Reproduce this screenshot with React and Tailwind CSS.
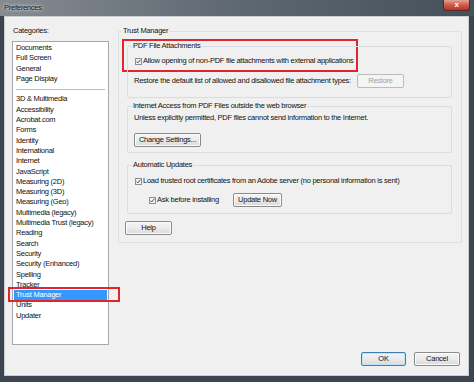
const categories = [
  'Documents',
  'Full Screen',
  'General',
  'Page Display',
  '-',
  '3D & Multimedia',
  'Accessibility',
  'Acrobat.com',
  'Forms',
  'Identity',
  'International',
  'Internet',
  'JavaScript',
  'Measuring (2D)',
  'Measuring (3D)',
  'Measuring (Geo)',
  'Multimedia (legacy)',
  'Multimedia Trust (legacy)',
  'Reading',
  'Search',
  'Security',
  'Security (Enhanced)',
  'Spelling',
  'Tracker',
  'Trust Manager',
  'Units',
  'Updater',
];

function Check() {
  return (
    <span className="flex h-[7px] w-[7px] shrink-0 items-center justify-center border border-[#8e8f8f] bg-[#f3f3f3]">
      <svg width="5" height="5" viewBox="0 0 5 5">
        <path d="M0.5 2.6 L1.8 3.9 L4.5 0.7" fill="none" stroke="#333" strokeWidth="0.9" />
      </svg>
    </span>
  );
}

function Btn({ children, className = '', disabled = false, primary = false }) {
  const border = primary
    ? 'border-[#3c7fb1] shadow-[inset_0_0_0_1px_#bfe2f6]'
    : disabled
      ? 'border-[#b9bcbf]'
      : 'border-[#8a8a8a] shadow-[inset_0_0_0_1px_#fcfcfc]';
  const fill = disabled
    ? 'bg-[#f4f4f4] text-[#a3a3a3]'
    : 'bg-linear-to-b from-[#f4f4f4] via-[#ebebeb] to-[#d9d9d9] text-[#111]';
  return (
    <div
      className={`flex h-[14px] shrink-0 items-center justify-center rounded-[2px] border leading-none ${border} ${fill} ${className}`}
    >
      {children}
    </div>
  );
}

function Group({ title, className = '', children }) {
  return (
    <div className={`relative ml-[8px] w-[325px] rounded-[2px] border border-[#d9dde0] ${className}`}>
      <div className="absolute left-[4px] top-[-6px] bg-[#f0f0f0] px-[1px] leading-[10px]">{title}</div>
      {children}
    </div>
  );
}

export default function App() {
  return (
    <div className="flex h-[382px] w-[474px] flex-col bg-[#3d4650] font-['Liberation_Sans',Arial,sans-serif] text-[7.5px] tracking-[-0.25px] text-[#111]">
      {/* Title bar */}
      <div className="relative flex h-[16px] shrink-0 items-center bg-linear-to-r from-[#868b91] via-[#5e6871] to-[#44505b] pl-[4px]">
        <span className="text-[#111] [text-shadow:0_0_4px_#d8dde2,0_0_2px_#e6eaee]">Preferences</span>
        <div className="absolute right-[4px] top-0 flex h-[11px] w-[27px] items-center justify-center rounded-b-[3px] border border-t-0 border-[#5a2a25] bg-linear-to-b from-[#e3a293] via-[#cf5a47] to-[#b8322a] text-[8px] font-bold leading-none text-white">
          x
        </div>
      </div>

      {/* Client area */}
      <div className="ml-[4px] mr-[5px] mb-[6px] flex flex-1 flex-col border border-[#c9ced3] bg-[#f0f0f0]">
        <div className="flex pt-[9px]">
          {/* Categories */}
          <div className="ml-[7px] w-[97px] shrink-0">
            <div className="h-[10px] pl-[1px] leading-[10px]">Categories:</div>
            <div className="mt-[5px] h-[304px] border border-[#a4a9ae] bg-white pt-[1px]">
              {categories.map((c, i) =>
                c === '-' ? (
                  <div key={i} className="flex h-[10.3px] items-center px-[3px]">
                    <div className="h-px w-full bg-[#a9bfd6]" />
                  </div>
                ) : c === 'Trust Manager' ? (
                  <div key={i} className="relative mx-[1px] h-[10.3px] bg-[#3399ff] pl-[2px] leading-[10.3px] text-white">
                    {c}
                    <div className="absolute left-[-6px] right-[-13px] top-[-3px] bottom-[-2px] border-2 border-[#e0262c]" />
                  </div>
                ) : (
                  <div key={i} className="h-[10.3px] pl-[3px] leading-[10.3px]">
                    {c}
                  </div>
                )
              )}
            </div>
          </div>

          {/* Trust Manager panel */}
          <div className="relative ml-[9px] mt-[5px] h-[212px] w-[344px] border border-[#dfe2e5]">
            <div className="absolute left-[3px] top-[-6px] bg-[#f0f0f0] px-[1px] leading-[10px]">Trust Manager</div>
            <div className="absolute left-[3px] top-[7px] h-[33px] w-[236px] border-2 border-[#e0262c]" />

            <Group title="PDF File Attachments" className="mt-[14px] h-[52px]">
              <div className="mt-[9px] flex h-[10px] items-center gap-[1px] pl-[7px]">
                <Check />
                <span className="leading-[10px]">Allow opening of non-PDF file attachments with external applications</span>
              </div>
              <div className="mt-[8px] flex items-center pl-[6px]">
                <span className="w-[223px] shrink-0 leading-[10px]">
                  Restore the default list of allowed and disallowed file attachment types:
                </span>
                <Btn disabled className="w-[47px]">Restore</Btn>
              </div>
            </Group>

            <Group title="Internet Access from PDF Files outside the web browser" className="mt-[8px] h-[47px]">
              <div className="mt-[6px] pl-[6px] leading-[10px]">
                Unless explicitly permitted, PDF files cannot send information to the Internet.
              </div>
              <div className="mt-[10px] pl-[6px]">
                <Btn className="w-[67px]">Change Settings...</Btn>
              </div>
            </Group>

            <Group title="Automatic Updates" className="mt-[12px] h-[49px]">
              <div className="mt-[10px] flex h-[10px] items-center gap-[1px] pl-[7px]">
                <Check />
                <span className="leading-[10px]">
                  Load trusted root certificates from an Adobe server (no personal information is sent)
                </span>
              </div>
              <div className="mt-[7px] flex items-center pl-[21px]">
                <Check />
                <span className="ml-[1px] w-[76px] leading-[10px]">Ask before installing</span>
                <Btn className="w-[49px]">Update Now</Btn>
              </div>
            </Group>

            <div className="ml-[6px] mt-[7px]">
              <Btn className="w-[47px]">Help</Btn>
            </div>
          </div>
        </div>

        {/* Dialog buttons */}
        <div className="mt-[7px] flex justify-end gap-[8px] pr-[8px]">
          <Btn primary className="w-[45px]">OK</Btn>
          <Btn className="w-[46px]">Cancel</Btn>
        </div>
      </div>
    </div>
  );
}
